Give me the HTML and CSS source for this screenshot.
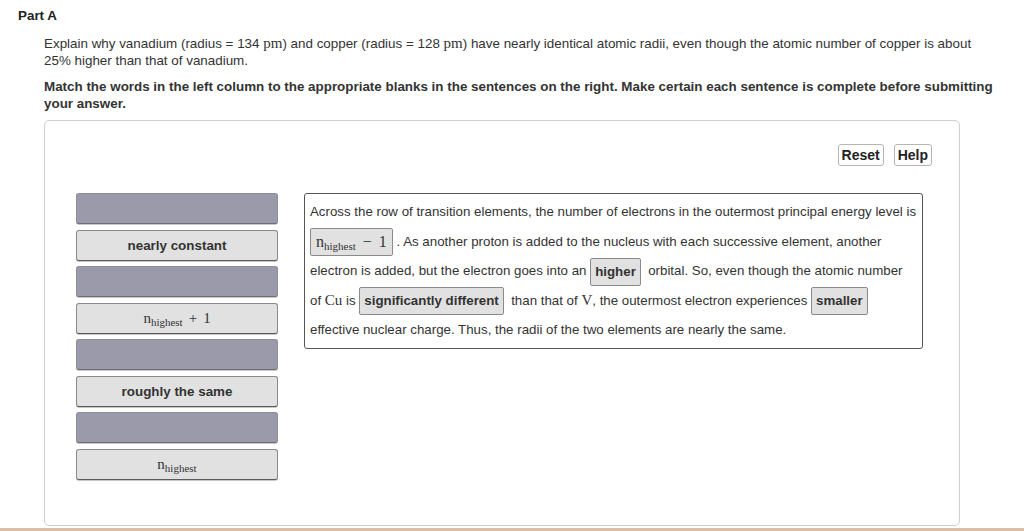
FILE: index.html
```html
<!DOCTYPE html>
<html>
<head>
<meta charset="utf-8">
<link rel="stylesheet" href="styles.css">
</head>
<body>
<div class="part-title">Part A</div>
<div class="content">
  <p class="prompt">Explain why vanadium (radius = 134 <span class="m">pm</span>) and copper (radius = 128 <span class="m">pm</span>) have nearly identical atomic radii, even though the atomic number of copper is about 25% higher than that of vanadium.</p>
  <p class="instr">Match the words in the left column to the appropriate blanks in the sentences on the right. Make certain each sentence is complete before submitting your answer.</p>
  <div class="panel">
    <div class="toolbar">
      <button class="tbtn">Reset</button>
      <button class="tbtn">Help</button>
    </div>
    <div class="work">
      <div class="bank">
        <div class="slot empty"></div>
        <div class="slot">nearly constant</div>
        <div class="slot empty"></div>
        <div class="slot math"><span class="m">n<sub>highest</sub></span><span class="m op">+</span><span class="m">1</span></div>
        <div class="slot empty"></div>
        <div class="slot">roughly the same</div>
        <div class="slot empty"></div>
        <div class="slot math"><span class="m">n<sub>highest</sub></span></div>
      </div>
      <div class="sentence">Across the row of transition elements, the number of electrons in the outermost principal energy level is<br><span class="blank math"><span class="m">n<sub>highest</sub></span><span class="m op">&minus;</span><span class="m">1</span></span> . As another proton is added to the nucleus with each successive element, another<br>electron is added, but the electron goes into an <span class="blank">higher</span> &nbsp;orbital. So, even though the atomic number<br>of <span class="m">Cu</span> is <span class="blank">significantly different</span> &nbsp;than that of <span class="m">V</span>, the outermost electron experiences <span class="blank">smaller</span><br>effective nuclear charge. Thus, the radii of the two elements are nearly the same.</div>
    </div>
  </div>
</div>
<div class="footline"></div>
</body>
</html>
```

FILE: styles.css
```css
html, body {
  margin: 0;
  padding: 0;
  background: #fff;
}
body {
  font-family: "Liberation Sans", Arial, sans-serif;
  font-size: 13.4px;
  color: #333;
  width: 1024px;
  height: 531px;
  overflow: hidden;
}
.part-title {
  font-weight: bold;
  font-size: 13.4px;
  color: #222;
  padding: 8px 0 0 18px;
  line-height: 15px;
}
.content {
  margin-left: 44px;
  width: 950px;
}
.prompt {
  margin: 12px 0 0 0;
  line-height: 17px;
}
.instr {
  margin: 9px 0 0 0;
  font-weight: bold;
  line-height: 17px;
}
.m {
  font-family: "Liberation Serif", "DejaVu Serif", serif;
  font-size: 15px;
}
.m sub {
  font-size: 11px;
  vertical-align: -3px;
  line-height: 0;
}
.op {
  margin: 0 6px;
}
.panel {
  margin-top: 8px;
  width: 916px;
  height: 406px;
  border: 1px solid #cfcfcf;
  border-radius: 5px;
  box-sizing: border-box;
}
.toolbar {
  display: flex;
  justify-content: flex-end;
  gap: 10px;
  padding: 23px 27px 0 0;
}
.tbtn {
  font-family: "Liberation Sans", Arial, sans-serif;
  font-size: 14px;
  font-weight: bold;
  color: #222;
  background: #fff;
  border: 1px solid #b5b5b5;
  border-radius: 3px;
  height: 22px;
  padding: 0 3px;
  line-height: 20px;
}
.work {
  display: flex;
  align-items: flex-start;
  gap: 26px;
  padding: 27px 0 0 31px;
}
.bank {
  display: flex;
  flex-direction: column;
  gap: 5.5px;
  width: 202px;
}
.slot {
  height: 31px;
  box-sizing: border-box;
  border: 1px solid #8a8a8a;
  border-bottom-color: #5a5a5a;
  border-radius: 3px;
  background: #e1e1e1;
  font-weight: bold;
  font-size: 13.4px;
  color: #333;
  display: flex;
  align-items: center;
  justify-content: center;
  box-shadow: 0 1px 0 #c8c8c8;
}
.slot.empty {
  background: #9b9aab;
  border-color: #8e8d9c;
  border-bottom-color: #6e6d7a;
}
.slot.math {
  font-weight: normal;
  color: #333;
}
.sentence {
  width: 619px;
  box-sizing: border-box;
  border: 1px solid #555;
  border-radius: 3px;
  padding: 3px 0 3px 5px;
  line-height: 29.6px;
  font-size: 13.3px;
  color: #333;
  white-space: nowrap;
}
.blank {
  display: inline-block;
  line-height: 26px;
  height: 28px;
  box-sizing: border-box;
  padding: 0 4px;
  border: 1px solid #8a8a8a;
  border-radius: 2px;
  background: #e1e1e1;
  font-weight: bold;
  vertical-align: middle;
}
.blank.math {
  font-weight: normal;
  padding: 0 5px;
}
.blank .m {
  font-size: 16px;
}
.blank .op {
  margin: 0 7px;
}
.footline {
  margin-top: 2px;
  height: 3px;
  background: #dcbda6;
}
```
